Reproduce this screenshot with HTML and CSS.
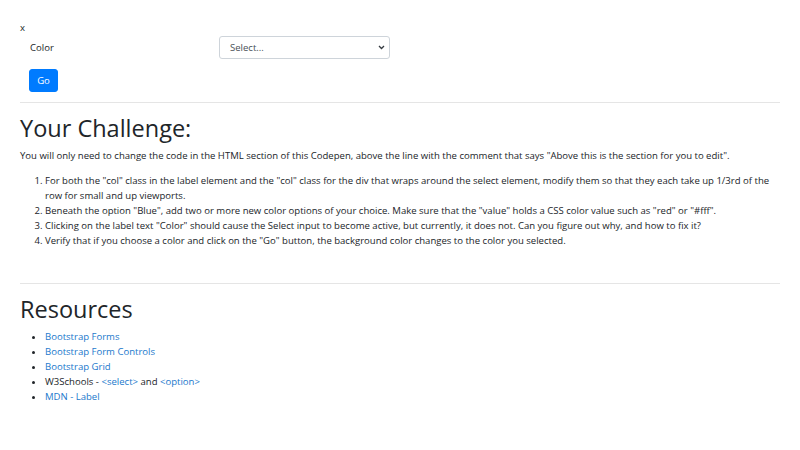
FILE: index.html
```html
<!DOCTYPE html>
<html>
<head>
<meta charset="utf-8">
<link rel="stylesheet" href="styles.css">
</head>
<body>
<div class="page">
  <div class="x">x</div>
  <form class="form">
    <div class="row">
      <label class="label">Color</label>
      <div class="field">
        <div class="select">
          <span>Select...</span>
          <svg class="chev" width="7" height="5" viewBox="0 0 7 5"><path d="M1 1 L3.5 3.5 L6 1" fill="none" stroke="#343a40" stroke-width="1.3"/></svg>
        </div>
      </div>
    </div>
    <div class="btnrow"><button type="button" class="btn">Go</button></div>
  </form>
  <hr class="rule">
  <h1 class="title">Your Challenge:</h1>
  <p class="para">You will only need to change the code in the HTML section of this Codepen, above the line with the comment that says "Above this is the section for you to edit".</p>
  <ol class="steps">
    <li>For both the "col" class in the label element and the "col" class for the div that wraps around the select element, modify them so that they each take up 1/3rd of the row for small and up viewports.</li>
    <li>Beneath the option "Blue", add two or more new color options of your choice. Make sure that the "value" holds a CSS color value such as "red" or "#fff".</li>
    <li>Clicking on the label text "Color" should cause the Select input to become active, but currently, it does not. Can you figure out why, and how to fix it?</li>
    <li>Verify that if you choose a color and click on the "Go" button, the background color changes to the color you selected.</li>
  </ol>
  <hr class="rule rule2">
  <h1 class="title">Resources</h1>
  <ul class="links">
    <li><a href="#">Bootstrap Forms</a></li>
    <li><a href="#">Bootstrap Form Controls</a></li>
    <li><a href="#">Bootstrap Grid</a></li>
    <li>W3Schools - <a href="#">&lt;select&gt;</a> and <a href="#">&lt;option&gt;</a></li>
    <li><a href="#">MDN - Label</a></li>
  </ul>
</div>
</body>
</html>
```
FILE: styles.css
```css
html, body {
  margin: 0;
  padding: 0;
  background: #fff;
}
body {
  font-family: "Open Sans", "Noto Sans", sans-serif;
  font-size: 9.55px;
  line-height: 15px;
  color: #212529;
}
.page {
  padding: 20px 20px 0 20px;
}
.x {
  line-height: 15px;
}
.row {
  display: flex;
  align-items: center;
  margin-top: 1px;
}
.label {
  width: 169px;
  padding: 0 10px;
}
.field {
  width: 171px;
  padding: 0 10px;
}
.select {
  height: 21px;
  border: 1px solid #ced4da;
  border-radius: 3px;
  display: flex;
  align-items: center;
  justify-content: space-between;
  padding: 0 4px 0 10px;
  color: #495057;
}
.btnrow {
  padding: 10px 9px 0;
}
.btn {
  font-family: inherit;
  font-size: 9.55px;
  background: #007bff;
  color: #fff;
  border: 1px solid #007bff;
  border-radius: 3px;
  height: 23px;
  width: 29px;
  padding: 0;
}
.rule {
  border: 0;
  border-top: 1px solid rgba(0,0,0,0.1);
  margin: 10px 0;
}
.rule2 {
  margin-top: 35px;
}
.title {
  font-size: 23.5px;
  font-weight: 400;
  line-height: 30px;
  margin: 0 0 5px;
}
.para {
  margin: 0 0 10px;
}
.steps {
  margin: 0;
  padding-left: 25px;
}
.links {
  margin: 0;
  padding-left: 25px;
}
a {
  color: #1a78cc;
  text-decoration: none;
}
```
